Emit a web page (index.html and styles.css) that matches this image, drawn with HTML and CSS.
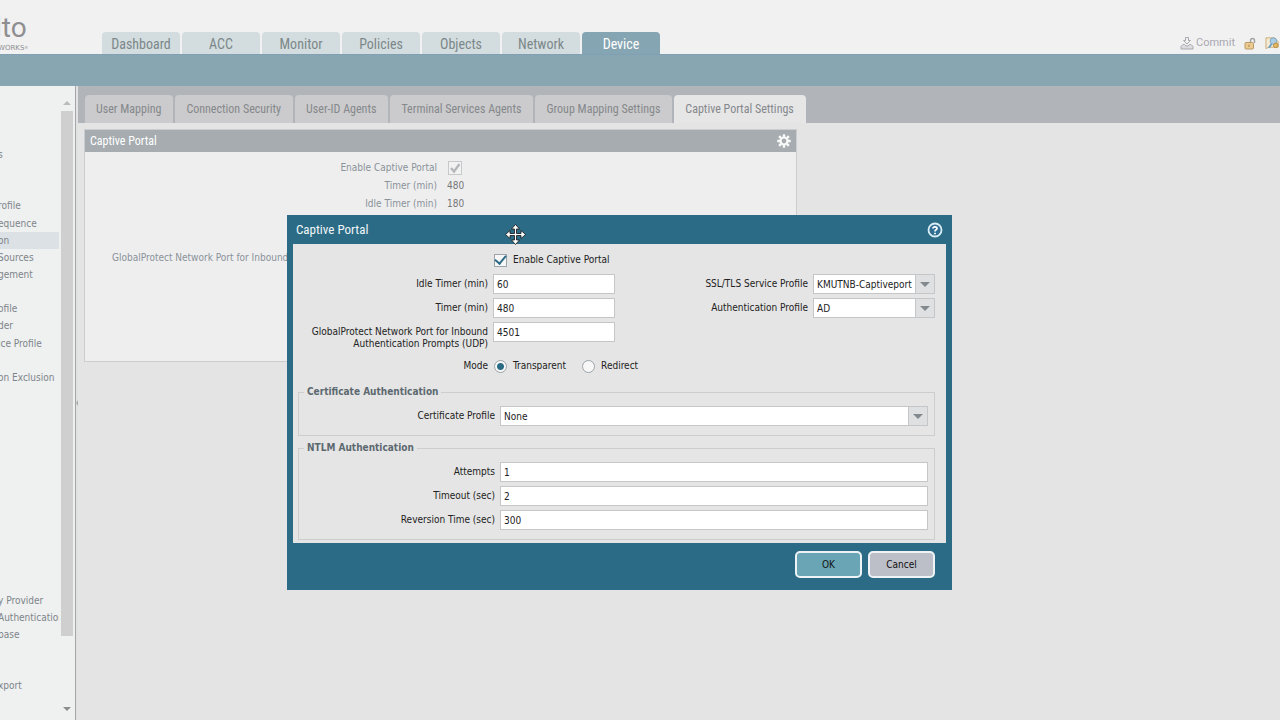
FILE: index.html
```html
<!DOCTYPE html>
<html lang="en">
<head>
<meta charset="utf-8">
<title>Captive Portal Settings</title>
<link rel="stylesheet" href="styles.css">
</head>
<body>
<div class="app">
  <header class="top">
    <div class="logo"><span class="logo-name">lto</span><span class="logo-sub">WORKS<small>®</small></span></div>
    <nav class="main-tabs">
      <a href="#">Dashboard</a><a href="#">ACC</a><a href="#">Monitor</a><a href="#">Policies</a><a href="#">Objects</a><a href="#">Network</a><a href="#" class="active">Device</a>
    </nav>
    <div class="tools">
      <button class="commit" type="button">
        <svg width="14" height="14" viewBox="0 0 14 14" fill="none" stroke="#a9a9af" stroke-width="1"><path d="M5.500 1.500h3v3h2L7 8 3.500 4.500h2z"/><path d="M3 8.500h1.500L6 10h2l1.500-1.500H11l2 2v2.500H1v-2.500z" fill="#dcdce0"/></svg>
        Commit
      </button>
      <button class="tool" type="button" aria-label="Lock"><svg width="12" height="13" viewBox="0 0 12 13"><path d="M6.500 6V3.500a2 2 0 0 1 4 0V6" fill="none" stroke="#a5a5a5" stroke-width="1.500"/><rect x="1" y="5.500" width="8.500" height="6.500" rx="1" fill="#eccb93" stroke="#b99a66"/><path d="M5 7.500v2.500" stroke="#a98850"/></svg></button>
      <button class="tool search" type="button" aria-label="Search"><svg width="16" height="14" viewBox="0 0 16 14"><path d="M1 1.500h9l4 4v6H4l-3 1.500z" fill="#f5ead4" stroke="#c9ab75"/><circle cx="9" cy="5" r="3.500" fill="#a9cfe6" stroke="#7fa6c2"/><path d="m7 8-3 4" stroke="#6b9fc4" stroke-width="2"/><circle cx="11.500" cy="9.500" r="2.500" fill="#e3b660" stroke="#b58e48"/></svg></button>
    </div>
  </header>
  <div class="band"></div>
  <div class="work">
    <aside class="side">
      <ul class="tree">
        <li></li><li></li><li></li><li>s</li><li></li><li></li>
        <li>rofile</li><li>equence</li><li class="selected">on</li><li>Sources</li><li>gement</li><li></li>
        <li>ofile</li><li>der</li><li>ice Profile</li><li></li><li>on Exclusion</li><li></li>
        <li></li><li></li><li></li><li></li><li></li><li></li>
        <li></li><li></li><li></li><li></li><li></li><li>y Provider</li>
        <li>Authentication</li><li>base</li><li></li><li></li><li>xport</li><li></li>
      </ul>
      <div class="scroll"><span class="up"></span><span class="thumb"></span><span class="down"></span></div>
    </aside>
    <div class="splitter"><span class="grip"></span></div>
    <main class="content">
      <nav class="sub-tabs">
        <a href="#">User Mapping</a><a href="#">Connection Security</a><a href="#">User-ID Agents</a><a href="#">Terminal Services Agents</a><a href="#">Group Mapping Settings</a><a href="#" class="active">Captive Portal Settings</a>
      </nav>
      <section class="panel">
        <header class="panel-head">
          <h2>Captive Portal</h2>
          <button type="button" class="gear" aria-label="Edit"><svg width="14" height="14" viewBox="-7 -7 14 14" fill="none" stroke="#f8f9f9"><circle r="3.500" stroke-width="2.200"/><path stroke-width="2.400" d="M0-4v-2.800M0 4v2.800M-4 0h-2.800M4 0h2.800M-2.900-2.900l-2-2M2.900 2.900l2 2M-2.900 2.900l-2 2M2.900-2.900l2-2"/></svg></button>
        </header>
        <dl class="facts">
          <dt>Enable Captive Portal</dt><dd><svg class="tick" width="14" height="14" viewBox="0 0 14 14"><rect x=".5" y=".5" width="13" height="13" fill="#f2f2f2" stroke="#c6c8c9"/><path d="m3 7 3 3.500L11.500 3" fill="none" stroke="#b4b8bb" stroke-width="2.400"/></svg></dd>
          <dt>Timer (min)</dt><dd>480</dd>
          <dt>Idle Timer (min)</dt><dd>180</dd>
          <dt></dt><dd></dd><dt></dt><dd></dd>
          <dt>GlobalProtect Network Port for Inbound Authentication</dt><dd></dd>
        </dl>
      </section>
    </main>
  </div>
</div>

<form class="dialog" role="dialog" aria-labelledby="dlg-title">
  <header class="dialog-head">
    <h1 id="dlg-title">Captive Portal</h1>
    <button type="button" class="help" aria-label="Help"><svg width="16" height="16" viewBox="0 0 16 16"><circle cx="8" cy="8" r="6.500" fill="#2f6d92" stroke="#d9edf4" stroke-width="1.800"/><path d="M6 6.500C6 4.300 10 4.300 10 6.500 10 8 8 7.700 8 9.500M8 10.700v1.500" fill="none" stroke="#fff" stroke-width="1.800"/></svg></button>
  </header>
  <div class="dialog-body">
    <div class="columns">
      <div class="grid left">
        <span></span>
        <label class="choice"><input type="checkbox" checked>Enable Captive Portal</label>
        <label for="idle">Idle Timer (min)</label><input id="idle" type="text" value="60">
        <label for="timer">Timer (min)</label><input id="timer" type="text" value="480">
        <label for="port">GlobalProtect Network Port for Inbound Authentication Prompts (UDP)</label><input id="port" type="text" value="4501">
        <span class="mode" id="mode">Mode</span>
        <div class="radios" role="radiogroup" aria-labelledby="mode">
          <label class="choice"><input type="radio" name="mode" checked>Transparent</label>
          <label class="choice"><input type="radio" name="mode">Redirect</label>
        </div>
      </div>
      <div class="grid right">
        <label for="ssl">SSL/TLS Service Profile</label>
        <div class="combo"><select id="ssl"><option>KMUTNB-Captiveport</option></select><span class="arrow"></span></div>
        <label for="auth">Authentication Profile</label>
        <div class="combo"><select id="auth"><option>AD</option></select><span class="arrow"></span></div>
      </div>
    </div>
    <fieldset>
      <legend>Certificate Authentication</legend>
      <div class="grid wide">
        <label for="cert">Certificate Profile</label>
        <div class="combo"><select id="cert"><option>None</option></select><span class="arrow"></span></div>
      </div>
    </fieldset>
    <fieldset>
      <legend>NTLM Authentication</legend>
      <div class="grid wide">
        <label for="att">Attempts</label><input id="att" type="text" value="1">
        <label for="tmo">Timeout (sec)</label><input id="tmo" type="text" value="2">
        <label for="rev">Reversion Time (sec)</label><input id="rev" type="text" value="300">
      </div>
    </fieldset>
  </div>
  <footer class="dialog-foot">
    <button type="submit" class="ok">OK</button>
    <button type="button" class="cancel">Cancel</button>
  </footer>
  <svg class="pointer" width="21" height="21" viewBox="-10.500 -10.500 21 21"><path d="M0-10 4-5.500H1V-1h4.500v-3L10 0 5.500 4V1H1v4.500h3L0 10l-4-4.500h3V1h-4.500v3L-10 0l4.500-4v3H-1v-4.500h-3z" fill="#fff" stroke="#111" stroke-width=".8"/></svg>
</form>
</body>
</html>
```
FILE: styles.css
```css
* { box-sizing: border-box; }
:root {
  --ui: "DejaVu Sans Condensed", "Noto Sans", sans-serif;
  --narrow: "Liberation Sans Narrow", "Roboto Condensed", Roboto, sans-serif;
  --teal: #2c6b85;
}
body { margin: 0; font: 10px/12px var(--ui); color: #222; background: #e4e4e4; }
button { font: inherit; border: 0; padding: 0; background: none; }
a { text-decoration: none; color: inherit; }
h1, h2, ul, dl, dd { margin: 0; padding: 0; font-weight: normal; }
ul { list-style: none; }

.app { display: flex; flex-direction: column; height: 100vh; overflow: hidden; }

.top { display: flex; align-items: flex-end; height: 54px; background: #f1f1f2; }
.logo { display: flex; flex-direction: column; width: 102px; height: 41px; color: #8f8f91; overflow: hidden; }
.logo-name { margin-left: -5px; font: 28px/30px Roboto, sans-serif; }
.logo-sub { margin-left: -2px; font: 7px/10px "DejaVu Sans", sans-serif; }
.logo-sub small { font-size: 4px; vertical-align: top; }
.main-tabs { display: flex; gap: 2px; flex: 1; font: 14px/24px var(--narrow); color: #7b8789; }
.main-tabs a { width: 78px; height: 22px; text-align: center; background: #d3dddf; border-radius: 4px 4px 0 0; }
.main-tabs .active { background: #86a5b2; color: #fff; }
.tools { display: flex; align-items: center; gap: 9px; height: 22px; font: 11px/22px Roboto, sans-serif; color: #a9a9b1; }
.tools button { display: flex; align-items: center; gap: 2px; color: inherit; }
.tools .search { width: 15px; overflow: hidden; }

.band { height: 32px; background: #87a6b2; border-top: 1px solid #82a0b4; }

.work { display: flex; flex: 1; min-height: 0; }
.side { display: flex; width: 75px; background: #eff0f0; }
.tree { display: flex; flex-direction: column; width: 59px; padding: 9px 0 8px; color: #7d858a; overflow: hidden; white-space: nowrap; }
.tree li { flex: 1; display: flex; align-items: center; text-indent: -2px; }
.tree .selected { background: #dce1e5; }
.scroll { display: flex; flex-direction: column; align-items: center; justify-content: space-between; width: 16px; padding: 15px 2px 9px; }
.up, .down { border: 4px solid transparent; }
.up { border-top: 0; border-bottom-color: #bbb; }
.down { border-bottom: 0; border-top-color: #8d8d8d; }
.thumb { width: 12px; height: 86%; margin: 6px 0 auto; background: #cfcfd0; }
.splitter { display: flex; align-items: center; width: 3px; border-left: 1px solid #a3a5a8; background: #e2e2e3; }
.grip { border: 3px solid transparent; border-left: 0; border-right: 2px solid #aaa; }

.content { flex: 1; min-width: 0; background: #e4e4e4; }
.sub-tabs { display: flex; gap: 2px; padding: 9px 7px 0; background: #b1b4b8; font: 12px/28px var(--narrow); color: #85888b; white-space: nowrap; }
.sub-tabs a { height: 28px; padding: 0 12px 0 11px; background: #cbcbcd; border-radius: 4px 4px 0 0; }
.sub-tabs .active { background: #e6e6e7; }
.panel { width: 713px; height: 233px; margin: 6px; border: 1px solid #cbcdcf; background: #eeeeef; }
.panel-head { display: flex; align-items: center; justify-content: space-between; height: 22px; padding: 0 5px; background: #a6acaf; color: #fff; }
.panel-head h2 { font: 12px/22px var(--narrow); }
.gear, .help { display: flex; }
.facts { display: grid; grid-template-columns: 352px 1fr; grid-auto-rows: 18px; column-gap: 10px; padding-top: 7px; line-height: 18px; color: #8a9299; }
.facts dt { text-align: right; white-space: nowrap; }
.facts dt:last-of-type { width: 260px; margin-left: 27px; text-align: left; overflow: hidden; }
.facts dd { color: #777; }
.tick { display: block; margin: 2px 1px; }

.dialog { position: absolute; left: 287px; top: 215px; width: 665px; padding: 0 6px; background: var(--teal); border: 0; }
.dialog-head { display: flex; align-items: center; justify-content: space-between; height: 29px; padding: 0 3px; color: #f1f7f9; }
.dialog-head h1 { font: 13px/30px var(--narrow); }
.dialog-body { padding: 6px 11px 3px 5px; background: #e5e5e5; }
.columns { display: flex; justify-content: space-between; }
.grid { display: grid; gap: 4px 5px; align-items: start; }
.grid > label, .mode { padding-top: 4px; text-align: right; }
.left { grid-template-columns: 190px 122px; }
.right { grid-template-columns: 130px 122px; align-content: start; padding-top: 24px; }
.wide { grid-template-columns: 196px 1fr; }
.grid .choice { display: flex; align-items: center; gap: 5px; height: 20px; padding: 0; white-space: nowrap; }
.radios { display: flex; gap: 15px; }
.mode, .radios { margin-top: 2px; }
input[type="text"] { width: 100%; height: 20px; padding: 1px 3px 0; border: 1px solid #c5c6c8; background: #fff; font: inherit; color: #222; }
input[type="checkbox"], input[type="radio"] { appearance: none; flex: none; width: 13px; height: 13px; margin: 0 1px; border: 1px solid #9aa4a9; background: #f7f7f7; }
input[type="radio"] { border-radius: 50%; }
input[type="radio"]:checked { background: radial-gradient(circle, var(--teal) 3px, #f7f7f7 4px); }
input[type="checkbox"]:checked { display: grid; place-content: center; }
input[type="checkbox"]:checked::before { content: ""; width: 5px; height: 9px; margin-bottom: 3px; border: solid var(--teal); border-width: 0 2px 2px 0; transform: rotate(40deg); }
.combo { display: flex; height: 20px; border: 1px solid #c5c6c8; background: #fff; }
.combo select { appearance: none; flex: 1; min-width: 0; padding: 1px 0 0 3px; border: 0; background: #fff; font: inherit; color: #222; }
.arrow { display: flex; align-items: center; justify-content: center; width: 19px; border-left: 1px solid #c5c6c8; background: #dfe0e2; }
.arrow::before { content: ""; border: 5px solid transparent; border-top-color: #828a90; border-bottom: 0; }
fieldset { min-width: 0; margin: 0; padding: 6px 6px 9px 0; border: 1px solid #cdcdcf; }
.columns + fieldset { margin-top: 8px; }
fieldset + fieldset { margin-top: 4px; }
legend { margin-left: 5px; padding: 0 3px; font: bold 10px/16px var(--ui); color: #5d6970; }
.dialog-foot { display: flex; justify-content: flex-end; gap: 6px; padding: 8px 11px 12px; }
.dialog-foot button { width: 67px; height: 27px; border: 2px solid #eef4f6; border-radius: 5px; color: #111; }
.ok { background: #69a5b4; }
.cancel { background: #bcbec8; }
.pointer { position: absolute; left: 218px; top: 9px; }
```
